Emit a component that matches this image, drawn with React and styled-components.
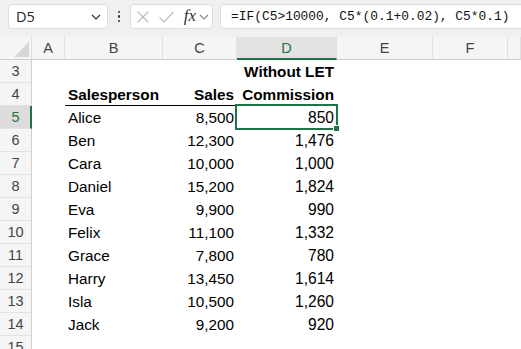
import React from 'react';
import styled, { createGlobalStyle } from 'styled-components';

const Global = createGlobalStyle`
  html, body { margin: 0; padding: 0; background: #fff; }
  body {
    width: 521px; height: 349px; overflow: hidden;
    font-family: "Liberation Sans", Arial, sans-serif;
  }
`;

const COLS = '32px 33px 98px 74px 100px 96px 75px 1fr';
const GREEN = '#217346';

const Page = styled.div`
  width: 521px;
  height: 349px;
  display: flex;
  flex-direction: column;
  overflow: hidden;
`;

const Toolbar = styled.div`
  height: 37px;
  flex: none;
  background: #f0f0f0;
  display: flex;
  align-items: flex-start;
  padding: 4px 0 0 8px;
  box-sizing: border-box;
`;

const Box = styled.div`
  height: 25px;
  box-sizing: border-box;
  background: #fff;
  border: 1px solid #dcdcdc;
  border-radius: 4px;
  display: flex;
  align-items: center;
  width: ${p => p.$w};
  margin-left: ${p => p.$ml || '0'};
  padding: ${p => p.$pad || '0'};
  flex: none;
`;

const NameText = styled.span`
  font-family: "Open Sans", "Liberation Sans", sans-serif;
  font-size: 14.5px;
  color: #222;
  flex: 1;
`;

const Dots = styled.div`
  width: 22px;
  height: 25px;
  display: flex;
  flex-direction: column;
  align-items: center;
  justify-content: center;
  gap: 2px;
  flex: none;
  & > i { width: 2.5px; height: 2.5px; background: #333; border-radius: 50%; display: block; }
`;

const FxText = styled.span`
  font-family: "Liberation Serif", "Times New Roman", serif;
  font-style: italic;
  font-size: 17px;
  color: #333;
  margin: 0 3px 2px 9px;
`;

const Formula = styled.span`
  font-family: "Liberation Mono", "Courier New", monospace;
  font-size: 12.9px;
  color: #111;
  white-space: nowrap;
`;

const Grid = styled.div`
  display: grid;
  grid-template-columns: ${COLS};
  grid-auto-rows: 23px;
`;

const ColHead = styled.div`
  box-sizing: border-box;
  background: ${p => (p.$sel ? '#e2e2e2' : '#f5f5f5')};
  border-right: 1px solid #e0e0e0;
  border-bottom: ${p => (p.$sel ? `2px solid ${GREEN}` : '1px solid #cfcfcf')};
  color: ${p => (p.$sel ? GREEN : '#444')};
  font-size: 14.5px;
  display: flex;
  align-items: center;
  justify-content: center;
  padding-top: ${p => (p.$sel ? '1px' : '0')};
`;

const Corner = styled(ColHead)`
  position: relative;
  svg { position: absolute; right: 2px; bottom: 2px; }
`;

const RowHead = styled.div`
  box-sizing: border-box;
  background: ${p => (p.$sel ? '#dcdcdc' : '#f5f5f5')};
  border-bottom: 1px solid #e2e2e2;
  border-right: ${p => (p.$sel ? `2px solid ${GREEN}` : '1px solid #cfcfcf')};
  color: ${p => (p.$sel ? GREEN : '#444')};
  font-size: 14.5px;
  display: flex;
  align-items: center;
  justify-content: center;
  padding-left: ${p => (p.$sel ? '1px' : '0')};
`;

const Cell = styled.div`
  box-sizing: border-box;
  position: relative;
  display: flex;
  align-items: center;
  justify-content: ${p => (p.$right ? 'flex-end' : 'flex-start')};
  padding: 1px 3px 0 3px;
  font-size: ${p => (p.$big ? '15.6px' : '15.3px')};
  font-weight: ${p => (p.$bold ? 700 : 400)};
  color: #000;
  white-space: nowrap;
  border-bottom: ${p => (p.$line ? '1px solid #000' : 'none')};
`;

const Selection = styled.div`
  position: absolute;
  left: -2px; top: -2px; right: -1px; bottom: -1px;
  border: 2px solid ${GREEN};
  pointer-events: none;
`;

const Handle = styled.div`
  position: absolute;
  right: -4px; bottom: -4px;
  width: 5px; height: 5px;
  background: ${GREEN};
  border: 1px solid #fff;
`;

const Chevron = ({ c = '#333' }) => (
  <svg width="10" height="6" viewBox="0 0 10 6">
    <path d="M1 1l4 4 4-4" fill="none" stroke={c} strokeWidth="1.2" />
  </svg>
);

const data = [
  ['Alice', '8,500', '850'],
  ['Ben', '12,300', '1,476'],
  ['Cara', '10,000', '1,000'],
  ['Daniel', '15,200', '1,824'],
  ['Eva', '9,900', '990'],
  ['Felix', '11,100', '1,332'],
  ['Grace', '7,800', '780'],
  ['Harry', '13,450', '1,614'],
  ['Isla', '10,500', '1,260'],
  ['Jack', '9,200', '920'],
];

export default function App() {
  return (
    <Page>
      <Global />
      <Toolbar>
        <Box $w="100px" $pad="0 6px 0 7px">
          <NameText>D5</NameText>
          <Chevron />
        </Box>
        <Dots><i /><i /><i /></Dots>
        <Box $w="83px" $pad="0 3px 0 5px">
          <svg width="14" height="14" viewBox="0 0 14 14">
            <path d="M1.5 1.5l11 11M12.5 1.5l-11 11" stroke="#bdbdbd" strokeWidth="1.2" fill="none" />
          </svg>
          <svg width="17" height="14" viewBox="0 0 17 14" style={{ marginLeft: 8 }}>
            <path d="M1.5 7.5l4.5 4.5 9.5-10" stroke="#bdbdbd" strokeWidth="1.2" fill="none" />
          </svg>
          <FxText>fx</FxText>
          <Chevron c="#888" />
        </Box>
        <Box $w="320px" $ml="7px" $pad="0 0 0 10px">
          <Formula>=IF(C5&gt;10000, C5*(0.1+0.02), C5*0.1)</Formula>
        </Box>
      </Toolbar>
      <Grid>
        <Corner>
          <svg width="15" height="15" viewBox="0 0 15 15">
            <path d="M15 0v15H0z" fill="#d6d6d6" />
          </svg>
        </Corner>
        {['A', 'B', 'C', 'D', 'E', 'F', ''].map(c => (
          <ColHead key={c || 'g'} $sel={c === 'D'}>{c}</ColHead>
        ))}

        <RowHead>3</RowHead>
        <Cell /><Cell /><Cell />
        <Cell $right $bold>Without LET</Cell>
        <Cell /><Cell /><Cell />

        <RowHead>4</RowHead>
        <Cell />
        <Cell $bold $line>Salesperson</Cell>
        <Cell $bold $right $line>Sales</Cell>
        <Cell $bold $right $line>Commission</Cell>
        <Cell /><Cell /><Cell />

        {data.map(([n, s, c], i) => (
          <React.Fragment key={n}>
            <RowHead $sel={i === 0}>{i + 5}</RowHead>
            <Cell />
            <Cell>{n}</Cell>
            <Cell $right>{s}</Cell>
            <Cell $right $big>
              {c}
              {i === 0 && (<Selection><Handle /></Selection>)}
            </Cell>
            <Cell /><Cell /><Cell />
          </React.Fragment>
        ))}

        <RowHead>15</RowHead>
        <Cell /><Cell /><Cell /><Cell /><Cell /><Cell /><Cell />
      </Grid>
    </Page>
  );
}
